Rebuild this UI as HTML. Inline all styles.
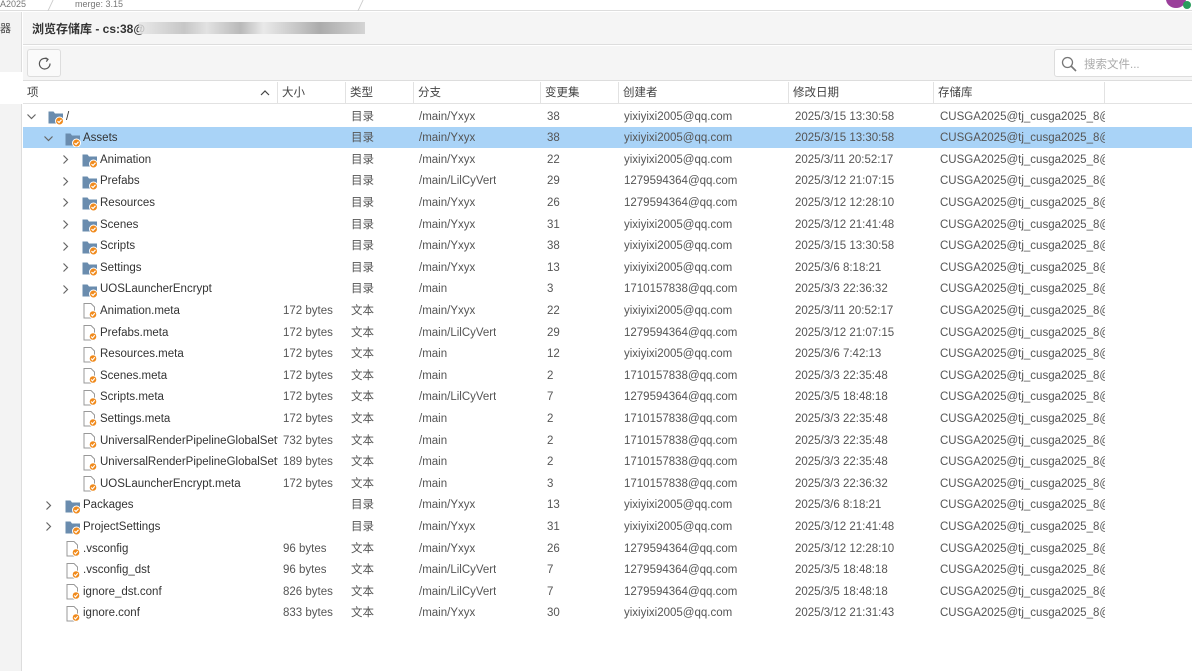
<!DOCTYPE html>
<html><head><meta charset="utf-8"><style>
*{margin:0;padding:0;box-sizing:border-box}
body{width:1192px;height:671px;overflow:hidden;background:#fff;font-family:"Liberation Sans","Noto Sans CJK SC",sans-serif;font-size:11.5px;color:#555;position:relative}
.abs{position:absolute}
.top{left:0;top:0;width:1192px;height:11px;background:#fff;border-bottom:1px solid #ddd;font-size:9px;color:#777}
.side{left:0;top:12px;width:22px;height:659px;background:#f3f3f3;border-right:1px solid #ddd}
.title{left:23px;top:12px;width:1169px;height:33px;background:#f5f5f5;border-bottom:1px solid #ddd}
.tool{left:23px;top:46px;width:1169px;height:35px;background:#f5f5f5;border-bottom:1px solid #ddd}
.hdr{left:23px;top:82px;width:1169px;height:22px;background:#fff;border-bottom:1px solid #e2e2e2}
.hdr span{position:absolute;top:0;height:22px;line-height:22px;padding-left:4px;border-right:1px solid #e2e2e2;color:#444}
.row{position:absolute;left:23px;width:1169px;height:21.6px;line-height:21.6px}
.row span{position:absolute;top:1.5px;white-space:nowrap;overflow:hidden}
.sel{background:#a9d3f7}
.n{color:#333}
.chev{width:9px;height:9px}
.fold{top:5px;width:16px;height:15px}
.file{top:4px;width:15px;height:16px}
</style></head><body>
<div class="abs top"><span class="abs" style="left:0;top:-1px">A2025</span><span class="abs" style="left:75px;top:-1px">merge: 3.15</span>
<div class="abs" style="left:50px;top:0;width:1px;height:11px;background:#ccc;transform:skewX(-25deg)"></div>
<div class="abs" style="left:360px;top:0;width:1px;height:11px;background:#ccc;transform:skewX(-25deg)"></div>
<div class="abs" style="left:1166px;top:-10px;width:20px;height:18px;border-radius:50%;background:#9b3f9b"></div>
<div class="abs" style="left:1183px;top:1px;width:8px;height:8px;border-radius:50%;background:#2a9d5c"></div></div>
<div class="abs side"><span class="abs" style="left:0;top:8px;font-size:11px;color:#444">器</span>
<div class="abs" style="left:0;top:60px;width:22px;height:32px;background:#fff"></div></div>
<div class="abs title"><span class="abs" style="left:9px;top:8px;font-size:12px;font-weight:bold;color:#333">浏览存储库 - cs:38@</span>
<div class="abs" style="left:116px;top:10px;width:226px;height:12px;background:linear-gradient(90deg,#e6e6e6 0,#bbb 20%,#ddd 30%,#aaa 45%,#e6e6e6 55%,#bbb 70%,#999 80%,#ccc 100%);opacity:.8"></div></div>
<div class="abs tool">
<div class="abs" style="left:4px;top:3px;width:34px;height:28px;border:1px solid #ddd;border-radius:3px;background:#fafafa">
<svg class="abs" style="left:10px;top:7px" width="14" height="14" viewBox="0 0 14 14"><path d="M9.5 2.2A5.3 5.3 0 1 0 12 6.5" fill="none" stroke="#555" stroke-width="1.2"/><path d="M7.5 0.8L10 2.3L8.3 4.6" fill="none" stroke="#555" stroke-width="1.2"/></svg></div>
<div class="abs" style="left:1031px;top:3px;width:140px;height:28px;border:1px solid #ddd;border-radius:3px;background:#fff">
<svg class="abs" style="left:6px;top:6px" width="16" height="16" viewBox="0 0 16 16"><circle cx="6.5" cy="6.5" r="5" fill="none" stroke="#777" stroke-width="1.3"/><path d="M10 10L15 15" stroke="#777" stroke-width="1.6"/></svg>
<span class="abs" style="left:29px;top:6px;color:#aaa">搜索文件...</span></div></div>
<div class="abs hdr">
<span style="left:0;width:255px">项<svg class="abs" style="left:237px;top:8px" width="10" height="6"><path d="M1 5L5 1L9 5" fill="none" stroke="#444" stroke-width="1.2"/></svg></span>
<span style="left:255px;width:68px">大小</span><span style="left:323px;width:68px">类型</span><span style="left:391px;width:127px">分支</span><span style="left:518px;width:78px">变更集</span><span style="left:596px;width:170px">创建者</span><span style="left:766px;width:145px">修改日期</span><span style="left:911px;width:171px">存储库</span></div>
<svg width="0" height="0" style="position:absolute"><defs>
<g id="fd"><path d="M0.5 1.5h5l1.5 2h8v10h-14.5z" fill="#6a8cae"/><circle cx="11.5" cy="11" r="4" fill="#f08a1c" stroke="#fff" stroke-width="1"/><path d="M9.5 11l1.5 1.5 2.5-2.7" fill="none" stroke="#fff" stroke-width="1.2"/></g>
<g id="fl"><path d="M1 0.5h7l3.5 3.5v11h-10.5z" fill="#fff" stroke="#999"/><circle cx="10" cy="11.5" r="3.8" fill="#f08a1c" stroke="#fff" stroke-width="1"/><path d="M8.1 11.5l1.4 1.4 2.3-2.6" fill="none" stroke="#fff" stroke-width="1.1"/></g>
<path id="cr" d="M2.5 0.5L6.5 4.5L2.5 8.5" fill="none" stroke="#666" stroke-width="1.2"/>
<path id="cd" d="M0.5 2.5L4.5 6.5L8.5 2.5" fill="none" stroke="#666" stroke-width="1.2"/>
</defs></svg>
<div id="rows"></div>
<script>
const R=[
[0,'d','f','/','','目录','/main/Yxyx','38','yixiyixi2005@qq.com','2025/3/15 13:30:58'],
[1,'d','f','Assets','','目录','/main/Yxyx','38','yixiyixi2005@qq.com','2025/3/15 13:30:58'],
[2,'r','f','Animation','','目录','/main/Yxyx','22','yixiyixi2005@qq.com','2025/3/11 20:52:17'],
[2,'r','f','Prefabs','','目录','/main/LilCyVert','29','1279594364@qq.com','2025/3/12 21:07:15'],
[2,'r','f','Resources','','目录','/main/Yxyx','26','1279594364@qq.com','2025/3/12 12:28:10'],
[2,'r','f','Scenes','','目录','/main/Yxyx','31','yixiyixi2005@qq.com','2025/3/12 21:41:48'],
[2,'r','f','Scripts','','目录','/main/Yxyx','38','yixiyixi2005@qq.com','2025/3/15 13:30:58'],
[2,'r','f','Settings','','目录','/main/Yxyx','13','yixiyixi2005@qq.com','2025/3/6 8:18:21'],
[2,'r','f','UOSLauncherEncrypt','','目录','/main','3','1710157838@qq.com','2025/3/3 22:36:32'],
[2,'','l','Animation.meta','172 bytes','文本','/main/Yxyx','22','yixiyixi2005@qq.com','2025/3/11 20:52:17'],
[2,'','l','Prefabs.meta','172 bytes','文本','/main/LilCyVert','29','1279594364@qq.com','2025/3/12 21:07:15'],
[2,'','l','Resources.meta','172 bytes','文本','/main','12','yixiyixi2005@qq.com','2025/3/6 7:42:13'],
[2,'','l','Scenes.meta','172 bytes','文本','/main','2','1710157838@qq.com','2025/3/3 22:35:48'],
[2,'','l','Scripts.meta','172 bytes','文本','/main/LilCyVert','7','1279594364@qq.com','2025/3/5 18:48:18'],
[2,'','l','Settings.meta','172 bytes','文本','/main','2','1710157838@qq.com','2025/3/3 22:35:48'],
[2,'','l','UniversalRenderPipelineGlobalSettings','732 bytes','文本','/main','2','1710157838@qq.com','2025/3/3 22:35:48'],
[2,'','l','UniversalRenderPipelineGlobalSettings','189 bytes','文本','/main','2','1710157838@qq.com','2025/3/3 22:35:48'],
[2,'','l','UOSLauncherEncrypt.meta','172 bytes','文本','/main','3','1710157838@qq.com','2025/3/3 22:36:32'],
[1,'r','f','Packages','','目录','/main/Yxyx','13','yixiyixi2005@qq.com','2025/3/6 8:18:21'],
[1,'r','f','ProjectSettings','','目录','/main/Yxyx','31','yixiyixi2005@qq.com','2025/3/12 21:41:48'],
[1,'','l','.vsconfig','96 bytes','文本','/main/Yxyx','26','1279594364@qq.com','2025/3/12 12:28:10'],
[1,'','l','.vsconfig_dst','96 bytes','文本','/main/LilCyVert','7','1279594364@qq.com','2025/3/5 18:48:18'],
[1,'','l','ignore_dst.conf','826 bytes','文本','/main/LilCyVert','7','1279594364@qq.com','2025/3/5 18:48:18'],
[1,'','l','ignore.conf','833 bytes','文本','/main/Yxyx','30','yixiyixi2005@qq.com','2025/3/12 21:31:43']];
let h='';
R.forEach((r,i)=>{const y=105+i*21.6,ind=r[0]*17;
h+=`<div class="row${i==1?' sel':''}" style="top:${y}px">`;
if(r[1])h+=`<svg class="abs chev" style="left:${4+ind}px;top:${r[1]=='d'?7:7}px" width="9" height="9"><use href="#c${r[1]}"/></svg>`;
h+=r[2]=='f'?`<svg class="abs fold" style="left:${25+ind}px" width="16" height="15"><use href="#fd"/></svg>`:`<svg class="abs file" style="left:${26+ind}px" width="15" height="16"><use href="#fl"/></svg>`;
h+=`<span class="n" style="left:${43+ind}px;width:${212-ind}px">${r[3]}</span><span style="left:260px">${r[4]}</span><span style="left:328px">${r[5]}</span><span style="left:396px">${r[6]}</span><span style="left:524px">${r[7]}</span><span style="left:601px">${r[8]}</span><span style="left:772px">${r[9]}</span><span style="left:917px;width:165px">CUSGA2025@tj_cusga2025_8@cloud</span></div>`;});
document.getElementById('rows').innerHTML=h;
</script>
</body></html>
